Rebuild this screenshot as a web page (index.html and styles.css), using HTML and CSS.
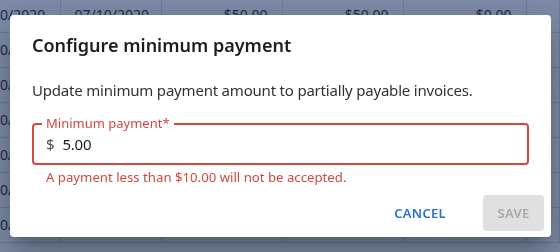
FILE: index.html
```html
<!DOCTYPE html>
<html lang="en">
<head>
    <meta charset="UTF-8">
    <title>Configure minimum payment</title>
    <link rel="stylesheet" href="styles.css">
</head>
<body>

    <table class="invoices">
        <tbody>
            <tr>
                <td class="col-date">10/2020</td>
                <td class="col-due">07/10/2020</td>
                <td class="col-num">$50.00</td>
                <td class="col-num">$50.00</td>
                <td class="col-num">$0.00</td>
                <td></td>
            </tr>
            <tr>
                <td class="col-date">10/2020</td>
                <td class="col-due">07/10/2020</td>
                <td class="col-num">$50.00</td>
                <td class="col-num">$50.00</td>
                <td class="col-num">$0.00</td>
                <td></td>
            </tr>
            <tr>
                <td class="col-date">10/2020</td>
                <td class="col-due">07/10/2020</td>
                <td class="col-num">$50.00</td>
                <td class="col-num">$50.00</td>
                <td class="col-num">$0.00</td>
                <td></td>
            </tr>
            <tr>
                <td class="col-date">10/2020</td>
                <td class="col-due">07/10/2020</td>
                <td class="col-num">$50.00</td>
                <td class="col-num">$50.00</td>
                <td class="col-num">$0.00</td>
                <td></td>
            </tr>
            <tr>
                <td class="col-date">10/2020</td>
                <td class="col-due">07/10/2020</td>
                <td class="col-num">$50.00</td>
                <td class="col-num">$50.00</td>
                <td class="col-num">$0.00</td>
                <td></td>
            </tr>
            <tr>
                <td class="col-date">10/2020</td>
                <td class="col-due">07/10/2020</td>
                <td class="col-num">$50.00</td>
                <td class="col-num">$50.00</td>
                <td class="col-num">$0.00</td>
                <td></td>
            </tr>
            <tr>
                <td class="col-date">10/2020</td>
                <td class="col-due">07/10/2020</td>
                <td class="col-num">$50.00</td>
                <td class="col-num">$50.00</td>
                <td class="col-num">$0.00</td>
                <td></td>
            </tr>
        </tbody>
    </table>

    <div class="backdrop"></div>

    <div class="dialog">
        <h2 class="dialog-title">Configure minimum payment</h2>
        <p class="dialog-text">Update minimum payment amount to partially payable invoices.</p>

        <div class="field">
            <span class="field-label">Minimum payment*</span>
            <span class="field-prefix">$</span>
            <span class="field-value">5.00</span>
        </div>
        <div class="field-error">A payment less than $10.00 will not be accepted.</div>

        <div class="dialog-actions">
            <button class="btn btn-text">Cancel</button>
            <button class="btn btn-disabled" disabled>Save</button>
        </div>
    </div>

</body>
</html>
```

FILE: styles.css
```css
body {
    margin: 0;
    font-family: "Noto Sans", Arial, sans-serif;
    background-color: #f4f6fa;
    width: 560px;
    height: 252px;
    overflow: hidden;
}

.invoices {
    border-collapse: collapse;
    width: 560px;
    margin-top: -3px;
    font-size: 14px;
    color: #202530;
    table-layout: fixed;
}
.invoices td {
    box-sizing: border-box;
    height: 35px;
    padding: 0 8px;
    border-bottom: 1px solid #c9d0dc;
    border-right: 1px solid #c9d0dc;
    white-space: nowrap;
    overflow: hidden;
}
.invoices td:nth-child(1) { width: 60px; padding-left: 0; text-indent: -8px; }
.invoices td:nth-child(2) { width: 101px; padding-left: 14px; }
.invoices td:nth-child(3) { width: 121px; }
.invoices td:nth-child(4) { width: 121px; }
.invoices td:nth-child(5) { width: 123px; }
.col-num {
    text-align: right;
    padding-right: 14px !important;
}

.backdrop {
    position: fixed;
    inset: 0;
    background-color: rgba(30, 52, 100, 0.55);
}

.dialog {
    position: fixed;
    left: 10px;
    top: 15px;
    width: 541px;
    height: 222px;
    box-sizing: border-box;
    padding: 18px 7px 6px 22px;
    background-color: #fff;
    border-radius: 4px;
    box-shadow: 0 11px 15px -7px rgba(0, 0, 0, 0.2), 0 24px 38px 3px rgba(0, 0, 0, 0.14), 0 9px 46px 8px rgba(0, 0, 0, 0.12);
    display: flex;
    flex-direction: column;
}

.dialog-title {
    margin: 0;
    font-size: 18px;
    line-height: 24px;
    font-weight: 600;
    color: #1b1d22;
}

.dialog-text {
    margin: 21px 0 0;
    font-size: 15px;
    letter-spacing: -0.2px;
    line-height: 24px;
    color: #2f3237;
}

.field {
    position: relative;
    margin: 21px 15px 0 0;
    height: 42px;
    box-sizing: border-box;
    border: 2px solid #cf4a3f;
    border-radius: 4px;
    display: flex;
    align-items: center;
    padding: 0 12px;
    font-size: 15px;
    letter-spacing: -0.2px;
    line-height: 24px;
}
.field-label {
    position: absolute;
    left: 8px;
    top: -11px;
    padding: 0 4px;
    background-color: #fff;
    font-size: 13px;
    letter-spacing: 0;
    line-height: 18px;
    color: #cf4a3f;
}
.field-prefix {
    color: #4a4d52;
    margin-right: 8px;
}
.field-value {
    color: #1b1d22;
}

.field-error {
    margin: 3px 0 0 14px;
    font-size: 13.2px;
    line-height: 18px;
    color: #cf4a3f;
}

.dialog-actions {
    margin-top: auto;
    display: flex;
    justify-content: flex-end;
    align-items: center;
    gap: 29px;
}

.btn {
    font-family: "Noto Sans", Arial, sans-serif;
    font-size: 13px;
    font-weight: 600;
    letter-spacing: 0.3px;
    text-transform: uppercase;
    border: none;
    border-radius: 4px;
    height: 36px;
    padding: 0 8px;
    cursor: pointer;
}
.btn-text {
    background: none;
    color: #2a6fd4;
}
.btn-disabled {
    background-color: #e0e0e0;
    color: #a8a8a8;
    width: 61px;
    cursor: default;
}
```
